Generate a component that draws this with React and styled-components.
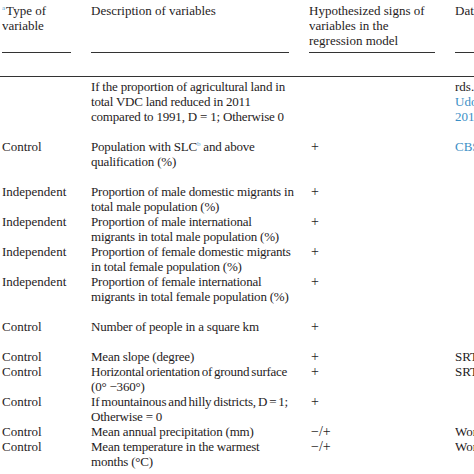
import styled, { createGlobalStyle } from 'styled-components';

const GlobalStyle = createGlobalStyle`
  html, body {
    margin: 0;
    padding: 0;
    background: #fff;
    overflow: hidden;
  }
  body {
    font-family: "Liberation Serif", "Times New Roman", serif;
    color: #1f1c1d;
  }
`;

const Page = styled.div`
  width: 474px;
  height: 474px;
  overflow: hidden;
  padding: 2.5px 0 0 2px;
  box-sizing: border-box;
  font-size: 13px;
  line-height: 15px;
`;

const Grid = styled.div`
  display: grid;
  grid-template-columns: 69px 198px 126px 1fr;
  column-gap: 20px;
`;

const HeadCell = styled.div`
  padding-bottom: 4px;
  border-bottom: 1.3px solid #333;
  white-space: ${p => (p.$nowrap ? 'nowrap' : 'normal')};
  overflow: hidden;
`;

const Rule = styled.div`
  margin: 23px 0 0 -2px;
  width: 476px;
  border-top: 1px solid #333;
  height: 2.5px;
`;

const Row = styled(Grid)`
  padding-bottom: ${p => (p.$spaced ? '15px' : '0')};
`;

const Cell = styled.div`
  white-space: nowrap;
`;

const Line = styled.div`
  letter-spacing: ${p => (p.$tight ?? -0.2)}px;
  word-spacing: ${p => p.$words || 0}px;
`;

const Sign = styled.div`
  padding-left: 2px;
  font-size: 14px;
`;

const RefCol = styled.div`
  overflow: hidden;
`;

const Ref = styled.div`
  white-space: nowrap;
  color: ${p => (p.$link ? '#3b8fc6' : '#1f1c1d')};
`;

const Sup = styled.sup`
  font-size: 7px;
  line-height: 0;
  color: #5a9fd0;
  vertical-align: 5px;
  margin-right: ${p => (p.$gap ? '1px' : '0')};
`;

const rows = [
  {
    type: '',
    lines: [
      'If the proportion of agricultural land in',
      'total VDC land reduced in 2011',
      'compared to 1991, D = 1; Otherwise 0',
    ],
    sign: '',
    refs: [{ t: 'rds.' }, { t: 'Udomsri', link: true }, { t: '2015', link: true }],
    spaced: true,
  },
  {
    type: 'Control',
    lines: [<>Population with SLC<Sup>b</Sup> and above</>, 'qualification (%)'],
    sign: '+',
    refs: [{ t: 'CBS (2011)', link: true }],
    spaced: true,
  },
  {
    type: 'Independent',
    lines: ['Proportion of male domestic migrants in', 'total male population (%)'],
    sign: '+',
  },
  {
    type: 'Independent',
    lines: ['Proportion of male international', 'migrants in total male population (%)'],
    sign: '+',
  },
  {
    type: 'Independent',
    lines: ['Proportion of female domestic migrants', 'in total female population (%)'],
    sign: '+',
  },
  {
    type: 'Independent',
    lines: ['Proportion of female international', 'migrants in total female population (%)'],
    sign: '+',
    spaced: true,
  },
  {
    type: 'Control',
    lines: ['Number of people in a square km'],
    sign: '+',
    spaced: true,
  },
  {
    type: 'Control',
    lines: ['Mean slope (degree)'],
    sign: '+',
    refs: [{ t: 'SRTM' }],
  },
  {
    type: 'Control',
    lines: [{ t: 'Horizontal orientation of ground surface', tight: -0.25, words: -1 }, '(0° −360°)'],
    sign: '+',
    refs: [{ t: 'SRTM' }],
  },
  {
    type: 'Control',
    lines: [{ t: 'If mountainous and hilly districts, D = 1;', tight: -0.2, words: -1 }, 'Otherwise = 0'],
    sign: '+',
  },
  {
    type: 'Control',
    lines: ['Mean annual precipitation (mm)'],
    sign: '−/+',
    refs: [{ t: 'WorldClim' }],
  },
  {
    type: 'Control',
    lines: ['Mean temperature in the warmest', 'months (°C)'],
    sign: '−/+',
    refs: [{ t: 'WorldClim' }],
  },
];

function renderLine(l, i) {
  if (l && typeof l === 'object' && 't' in l) {
    return <Line key={i} $tight={l.tight} $words={l.words}>{l.t}</Line>;
  }
  return <Line key={i}>{l}</Line>;
}

export default function App() {
  return (
    <Page>
      <GlobalStyle />
      <Grid>
        <HeadCell><Sup $gap>a</Sup>Type of variable</HeadCell>
        <HeadCell>Description of variables</HeadCell>
        <HeadCell>Hypothesized signs of variables in the regression model</HeadCell>
        <HeadCell $nowrap>Data source</HeadCell>
      </Grid>
      <Rule />
      {rows.map((r, i) => (
        <Row key={i} $spaced={r.spaced}>
          <Cell>{r.type}</Cell>
          <Cell>{r.lines.map(renderLine)}</Cell>
          <Sign>{r.sign}</Sign>
          <RefCol>
            {(r.refs || []).map((f, j) => (
              <Ref key={j} $link={f.link}>{f.t}</Ref>
            ))}
          </RefCol>
        </Row>
      ))}
    </Page>
  );
}
